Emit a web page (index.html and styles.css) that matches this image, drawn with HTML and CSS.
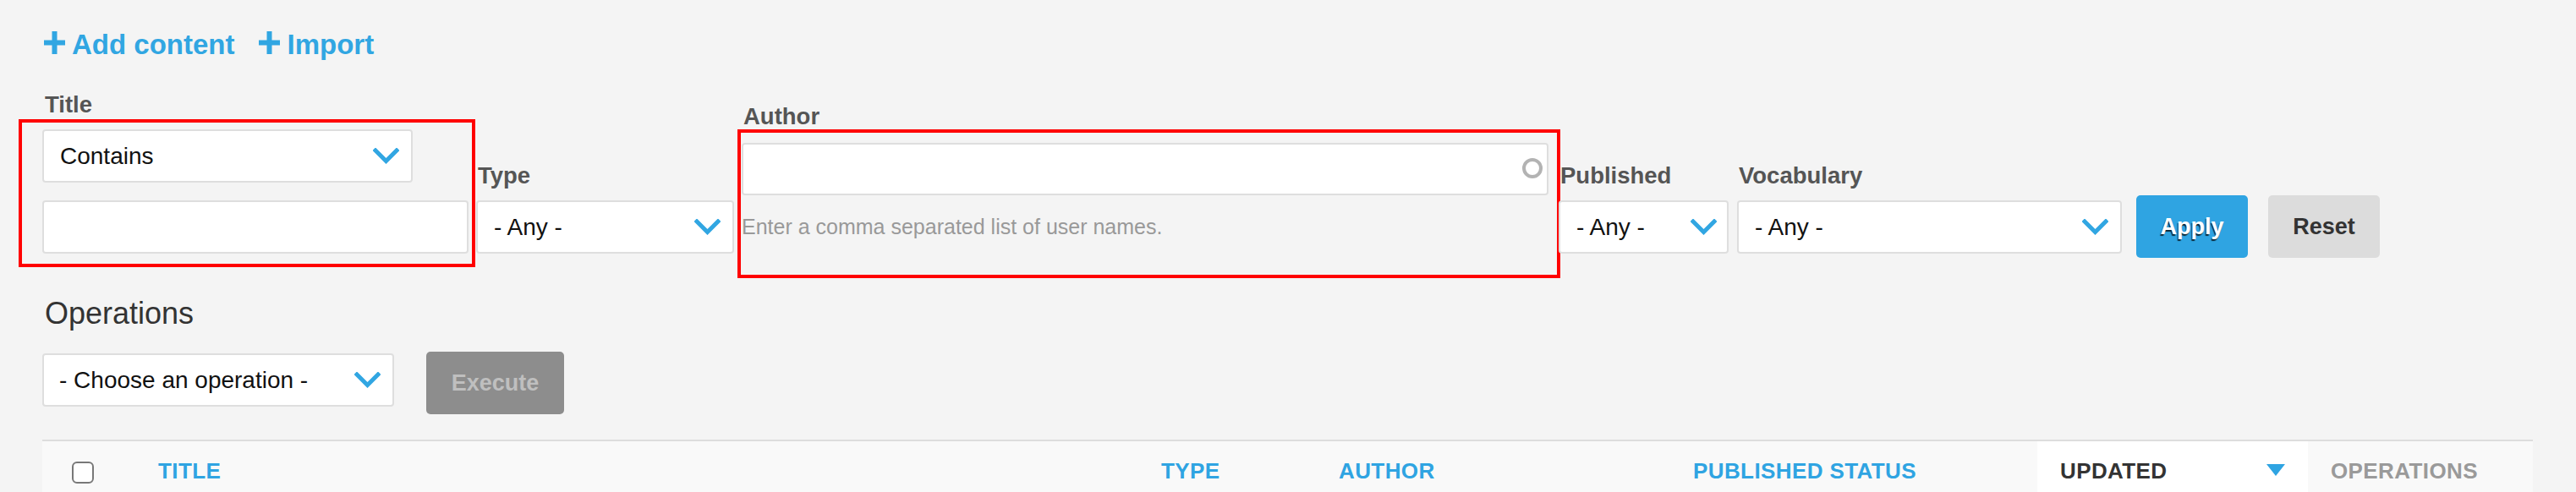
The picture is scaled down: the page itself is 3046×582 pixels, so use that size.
FILE: index.html
```html
<!DOCTYPE html>
<html lang="en">
<head>
<meta charset="utf-8">
<title>Content</title>
<link rel="stylesheet" href="styles.css">
</head>
<body>
<div class="page">
  <ul class="action-links">
    <li><a class="action-link" href="#"><svg class="plus" viewBox="0 0 25 27" width="25" height="27"><rect x="9.5" y="0" width="6" height="27"/><rect x="0" y="10.5" width="25" height="6"/></svg>Add content</a></li>
    <li><a class="action-link" href="#"><svg class="plus" viewBox="0 0 25 27" width="25" height="27"><rect x="9.5" y="0" width="6" height="27"/><rect x="0" y="10.5" width="25" height="6"/></svg>Import</a></li>
  </ul>

  <form class="filters">
    <div class="item item-title">
      <label class="label">Title</label>
      <div class="select sel-contains"><span>Contains</span><svg class="chev" viewBox="0 0 31 19" width="31" height="19"><polyline points="3,3 15.5,15.5 28,3"/></svg></div>
      <div class="input input-title"></div>
      <span class="annot annot-title"></span>
    </div>
    <div class="item item-type">
      <label class="label">Type</label>
      <div class="select sel-type"><span>- Any -</span><svg class="chev" viewBox="0 0 31 19" width="31" height="19"><polyline points="3,3 15.5,15.5 28,3"/></svg></div>
    </div>
    <div class="item item-author">
      <label class="label">Author</label>
      <div class="input input-author"><span class="throbber"></span></div>
      <div class="description">Enter a comma separated list of user names.</div>
      <span class="annot annot-author"></span>
    </div>
    <div class="item item-published">
      <label class="label">Published</label>
      <div class="select sel-published"><span>- Any -</span><svg class="chev" viewBox="0 0 31 19" width="31" height="19"><polyline points="3,3 15.5,15.5 28,3"/></svg></div>
    </div>
    <div class="item item-vocab">
      <label class="label">Vocabulary</label>
      <div class="select sel-vocab"><span>- Any -</span><svg class="chev" viewBox="0 0 31 19" width="31" height="19"><polyline points="3,3 15.5,15.5 28,3"/></svg></div>
    </div>
    <button type="button" class="btn btn-apply">Apply</button>
    <button type="button" class="btn btn-reset">Reset</button>
  </form>

  <h2 class="ops-title">Operations</h2>
  <div class="ops">
    <div class="select sel-ops"><span>- Choose an operation -</span><svg class="chev" viewBox="0 0 31 19" width="31" height="19"><polyline points="3,3 15.5,15.5 28,3"/></svg></div>
    <button type="button" class="btn btn-execute">Execute</button>
  </div>

  <table class="content-table">
    <colgroup>
      <col class="c-check"><col class="c-title"><col class="c-type"><col class="c-author"><col class="c-status"><col class="c-updated"><col class="c-ops">
    </colgroup>
    <thead>
      <tr>
        <th class="th-check"><span class="checkbox"></span></th>
        <th class="th-link">Title</th>
        <th class="th-link">Type</th>
        <th class="th-link">Author</th>
        <th class="th-link">Published status</th>
        <th class="th-active"><div class="sort-wrap"><span>Updated</span><span class="sort-arrow"></span></div></th>
        <th class="th-plain">Operations</th>
      </tr>
    </thead>
  </table>
</div>
</body>
</html>
```

FILE: styles.css
```css
* { box-sizing: border-box; }

html, body {
  margin: 0;
  padding: 0;
  background: #f4f4f4;
  font-family: "Liberation Sans", Arial, Helvetica, sans-serif;
  color: #333;
}

.page {
  padding: 33px 51px 0 50px;
}

/* Action links */
.action-links {
  list-style: none;
  margin: 0;
  padding: 0;
  display: flex;
  gap: 27px;
}
.action-link {
  color: #31a6e2;
  text-decoration: none;
  font-weight: bold;
  font-size: 33px;
  line-height: 40px;
  white-space: nowrap;
}
.plus {
  fill: #31a6e2;
  margin: 0 8px 0 2px;
  vertical-align: baseline;
}

/* Filters */
.filters {
  margin-top: 33px;
  display: flex;
  align-items: flex-end;
}
.item {
  position: relative;
  display: flex;
  flex-direction: column;
  margin-bottom: 5px;
}
.label {
  display: block;
  font-size: 27.5px;
  font-weight: bold;
  line-height: 36px;
  color: #555;
  margin-bottom: 11px;
  padding-left: 2px;
}
.item-title .label { padding-left: 3px; }
.item-author .label { margin-bottom: 13px; }

.select {
  height: 63px;
  background: #fff;
  border: 2px solid #dedede;
  border-radius: 4px;
  display: flex;
  align-items: center;
  justify-content: space-between;
  padding: 0 14px 0 19px;
  font-size: 28px;
  color: #111;
  white-space: nowrap;
}
.chev {
  fill: none;
  stroke: #31a6e2;
  stroke-width: 5;
  stroke-linecap: square;
  stroke-linejoin: miter;
  flex: none;
}
.input {
  height: 63px;
  background: #fff;
  border: 2px solid #dedede;
  border-radius: 4px;
}

.item-title { width: 504px; margin-right: 9px; }
.sel-contains { width: 438px; margin-bottom: 21px; }
.input-title { width: 504px; }

.item-type { width: 305px; margin-right: 9px; }

.item-author { width: 954px; margin-right: 12px; }
.input-author {
  height: 62px;
  display: flex;
  align-items: center;
  justify-content: flex-end;
  padding-right: 5px;
}
.throbber {
  width: 24px;
  height: 24px;
  border: 4px solid #b3b3b3;
  border-radius: 50%;
  margin-bottom: 3px;
  filter: blur(0.6px);
}
.description {
  margin-top: 19px;
  margin-bottom: 14px;
  font-size: 25px;
  line-height: 36px;
  color: #999;
  white-space: nowrap;
}

.item-published { width: 201px; margin-right: 10px; }
.sel-published { padding-right: 12px; }
.item-vocab { width: 455px; margin-right: 17px; }

.btn {
  height: 74px;
  border: 0;
  border-radius: 5px;
  font-family: "Liberation Sans", Arial, Helvetica, sans-serif;
  font-weight: bold;
  font-size: 27px;
  padding: 0;
  cursor: pointer;
}
.btn-apply {
  width: 132px;
  margin-right: 24px;
  background: #2fa4e2;
  color: #fff;
  text-shadow: -1px 2px 1px rgba(0, 0, 0, 0.75);
}
.btn-reset {
  width: 132px;
  background: #dcdcdc;
  color: #333;
}

/* Operations */
.ops-title {
  margin: 44px 0 23px;
  font-size: 36px;
  font-weight: normal;
  line-height: 44px;
  color: #333;
  padding-left: 3px;
}
.ops {
  display: flex;
  align-items: flex-start;
}
.sel-ops {
  width: 416px;
  margin-top: 2px;
  margin-right: 38px;
  padding-left: 18px;
}
.btn-execute {
  width: 163px;
  background: #8d8d8d;
  color: #bfbfbf;
}

/* Table */
.content-table {
  margin-top: 30px;
  width: 100%;
  table-layout: fixed;
  border-collapse: collapse;
  background: #f9f9f9;
  border-top: 2px solid #dddddd;
}
.c-check { width: 110px; }
.c-title { width: 1186px; }
.c-type { width: 210px; }
.c-author { width: 419px; }
.c-status { width: 434px; }
.c-updated { width: 320px; }
.c-ops { width: 266px; }

.content-table th {
  text-align: left;
  padding: 17px 27px 24px 27px;
  font-size: 26px;
  line-height: 36px;
  font-weight: bold;
  text-transform: uppercase;
  letter-spacing: 0.4px;
  white-space: nowrap;
}
.th-check { padding-left: 35px !important; }
.checkbox {
  display: inline-block;
  width: 26px;
  height: 26px;
  border: 2.5px solid #787878;
  border-radius: 6px;
  background: #fff;
  vertical-align: middle;
}
.th-link { color: #2fa4e2; }
.th-active {
  background: #fff;
  color: #333;
}
.th-plain { color: #9a9a9a; }
.sort-wrap {
  display: flex;
  align-items: center;
  justify-content: space-between;
}
.sort-arrow {
  width: 0;
  height: 0;
  border-left: 11px solid transparent;
  border-right: 11px solid transparent;
  border-top: 14px solid #2fa4e2;
  margin-top: -3px;
}

/* Annotation overlays */
.annot {
  position: absolute;
  border: 4px solid #ff0000;
  pointer-events: none;
}
.annot-title {
  left: -28px;
  top: 35px;
  width: 540px;
  height: 175px;
}
.annot-author {
  left: -5px;
  top: 33px;
  width: 973px;
  height: 176px;
}
```
